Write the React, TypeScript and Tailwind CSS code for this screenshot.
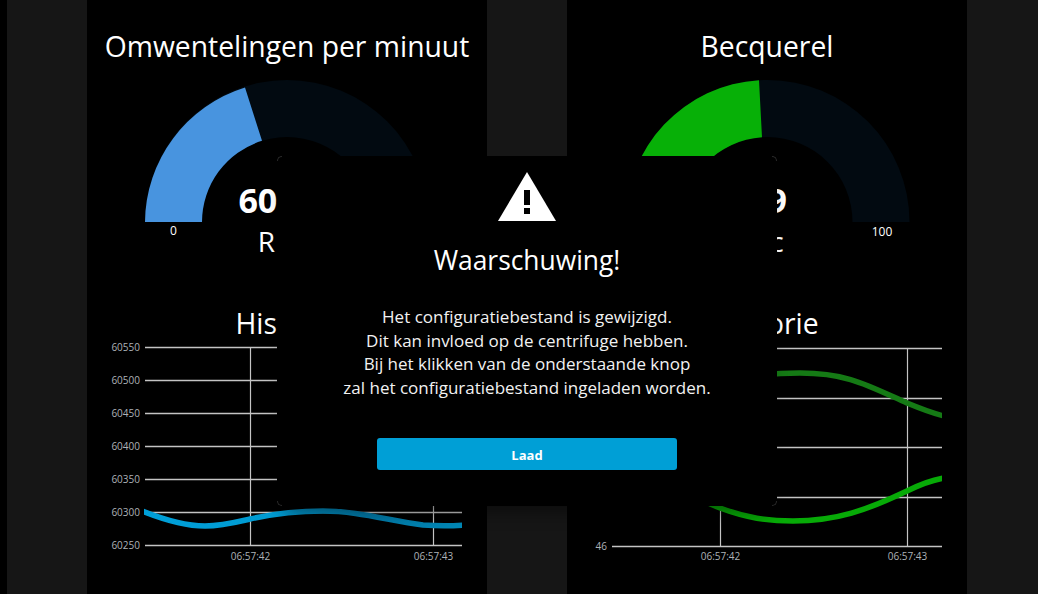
import React from "react";

function Gauge({ fill, fillPath, bgPath, cx, value, unit, minLabel, maxLabel, maxX }: { fill: string; fillPath: string; bgPath: string; cx: number; value: string; unit: string; minLabel?: string; maxLabel?: string; maxX?: number }) {
  return (
    <svg width="400" height="232" className="block shrink-0">
      <path d={bgPath} fill="#020a11" />
      <path d={fillPath} fill={fill} />
      <text x={cx} y="145" textAnchor="middle" fill="#fff" fontSize="34" fontWeight="700">{value}</text>
      <text x={cx + 0.5} y="184" textAnchor="middle" fill="#fff" fontSize="28">{unit}</text>
      {minLabel && <text x="86.5" y="167" textAnchor="middle" fill="#fff" fontSize="12">{minLabel}</text>}
      {maxLabel && <text x={maxX} y="168" textAnchor="middle" fill="#fff" fontSize="12">{maxLabel}</text>}
    </svg>
  );
}

function Panel({ title, chartTitle, children }: { title: string; chartTitle: string; children: React.ReactNode }) {
  const [gauge, chart] = React.Children.toArray(children);
  return (
    <section className="w-[400px] shrink-0 flex flex-col items-center pt-[26px]">
      <h2 className="h-[42px] leading-[40px] text-[28.3px] text-white font-normal whitespace-nowrap">{title}</h2>
      {gauge}
      <h2 className="h-[40px] leading-[46px] text-[28.3px] text-white font-normal">{chartTitle}</h2>
      {chart}
    </section>
  );
}

const axis = "#adb2b8";
const grid = "#c4c4c4";

function LeftChart() {
  const ys: [number, string][] = [[7, "60550"], [40, "60500"], [73, "60450"], [106, "60400"], [139, "60350"], [172, "60300"], [205, "60250"]];
  return (
    <svg width="400" height="234" className="block shrink-0">
      <defs>
        <linearGradient id="blue" gradientUnits="userSpaceOnUse" x1="57" x2="375" y1="0" y2="0">
          <stop offset="0" stopColor="#009fd8" />
          <stop offset="0.4" stopColor="#009bd2" />
          <stop offset="0.7" stopColor="#0078a6" />
          <stop offset="1" stopColor="#008ab9" />
        </linearGradient>
        <clipPath id="plotL"><rect x="57" y="0" width="318" height="210" /></clipPath>
      </defs>
      {ys.map(([y, t]) => (
        <g key={t}>
          <line x1="58" x2="375" y1={y + 0.5} y2={y + 0.5} stroke={grid} strokeWidth="1.3" />
          <text x="53" y={y + 4} textAnchor="end" fill={axis} fontSize="10">{t}</text>
        </g>
      ))}
      <line x1="163.5" x2="163.5" y1="7" y2="205" stroke={grid} strokeWidth="1.2" />
      <line x1="346.5" x2="346.5" y1="7" y2="205" stroke={grid} strokeWidth="1.2" />
      <g clipPath="url(#plotL)">
        <path d="M55 171 C 80 181,100 186,118 186 C 135 186,150 182,163 179 C 190 173,210 171,236 171 C 270 171,300 180,336 185 C 350 186,365 186,377 185" fill="none" stroke="url(#blue)" strokeWidth="5.5" />
      </g>
      <text x="163.5" y="220" textAnchor="middle" fill={axis} fontSize="10">06:57:42</text>
      <text x="346.5" y="220" textAnchor="middle" fill={axis} fontSize="10">06:57:43</text>
    </svg>
  );
}

function RightChart() {
  const ys = [8, 58, 107, 157, 206];
  return (
    <svg width="400" height="234" className="block shrink-0">
      <defs>
        <clipPath id="plotR"><rect x="45" y="0" width="330" height="210" /></clipPath>
      </defs>
      {ys.map((y) => (
        <line key={y} x1="45" x2="375" y1={y + 0.5} y2={y + 0.5} stroke={grid} strokeWidth="1.3" />
      ))}
      <text x="40" y="210" textAnchor="end" fill={axis} fontSize="10">46</text>
      <line x1="153.5" x2="153.5" y1="8" y2="206" stroke={grid} strokeWidth="1.2" />
      <line x1="340.5" x2="340.5" y1="8" y2="206" stroke={grid} strokeWidth="1.2" />
      <g clipPath="url(#plotR)">
        <path d="M45 90 C 100 50,160 33,233 33 C 280 33,300 45,340 63 C 352 68,365 73,377 76" fill="none" stroke="#157a15" strokeWidth="5.5" />
        <path d="M45 90 C 80 125,110 152,153 168 C 180 178,200 181,226 181 C 270 181,300 170,340 151 C 352 145,365 140,377 138" fill="none" stroke="#07aa07" strokeWidth="5.5" />
      </g>
      <text x="153.5" y="220" textAnchor="middle" fill={axis} fontSize="10">06:57:42</text>
      <text x="340.5" y="220" textAnchor="middle" fill={axis} fontSize="10">06:57:43</text>
    </svg>
  );
}

function Modal() {
  return (
    <div className="absolute left-[277px] top-[156px] w-[500px] h-[350px] rounded-[6px] bg-black shadow-[0_14px_16px_-8px_rgba(0,0,0,0.45)] flex flex-col items-center text-white">
      <span className="absolute left-0 top-0 size-[5px] rounded-tl-[5px] border-l border-t border-[#2a2a2a]" />
      <span className="absolute right-0 top-0 size-[5px] rounded-tr-[5px] border-r border-t border-[#2a2a2a]" />
      <span className="absolute left-0 bottom-0 size-[5px] rounded-bl-[5px] border-l border-b border-[#2a2a2a]" />
      <span className="absolute right-0 bottom-0 size-[5px] rounded-br-[5px] border-r border-b border-[#2a2a2a]" />
      <svg width="58" height="49" viewBox="0 0 58 49" className="mt-[16px] shrink-0">
        <path d="M29 0 L58 49 L0 49 Z" fill="#fff" />
        <rect x="26" y="18" width="6" height="15" fill="#000" />
        <rect x="26" y="36" width="6" height="6" fill="#000" />
      </svg>
      <h1 className="mt-[19px] h-[40px] leading-[40px] text-[26.4px] font-normal">Waarschuwing!</h1>
      <p className="mt-[25px] text-center text-[17px] leading-[23.67px] text-[#f2f2f2] whitespace-nowrap">
        Het configuratiebestand is gewijzigd.<br />
        Dit kan invloed op de centrifuge hebben.<br />
        Bij het klikken van de onderstaande knop<br />
        zal het configuratiebestand ingeladen worden.
      </p>
      <button className="mt-[38px] w-[300px] h-[32px] pt-[4px] rounded-[3px] bg-[#009fd6] text-white text-[13px] font-bold">Laad</button>
    </div>
  );
}

export default function App() {
  return (
    <div className="relative h-[594px] w-full overflow-hidden bg-black flex pl-[7px] font-['Open_Sans',sans-serif]">
      <div className="w-[80px] shrink-0 bg-[#161616]" />
      <Panel title="Omwentelingen per minuut" chartTitle="Historie">
        <Gauge
          fill="#4894df"
          cx={200}
          bgPath="M58 154 A142 142 0 0 1 342 154 L285 154 A85 85 0 0 0 115 154 Z"
          fillPath="M58 154 A142 142 0 0 1 158 19.6 L175 72.8 A85 85 0 0 0 115 154 Z"
          value="60300"
          unit="RPM"
          minLabel="0"
        />
        <LeftChart />
      </Panel>
      <div className="w-[80px] shrink-0 bg-[#161616]" />
      <Panel title="Becquerel" chartTitle="Historie">
        <Gauge
          fill="#07b007"
          cx={200.5}
          bgPath="M58.5 154 A142 142 0 0 1 342.5 154 L285.5 154 A85 85 0 0 0 115.5 154 Z"
          fillPath="M58.5 154 A142 142 0 0 1 192 12.2 L195 69.2 A85 85 0 0 0 115.5 154 Z"
          value="49"
          unit="Bc"
          maxLabel="100"
          maxX={315}
        />
        <RightChart />
      </Panel>
      <div className="flex-1 bg-[#161616]" />
      <Modal />
    </div>
  );
}
